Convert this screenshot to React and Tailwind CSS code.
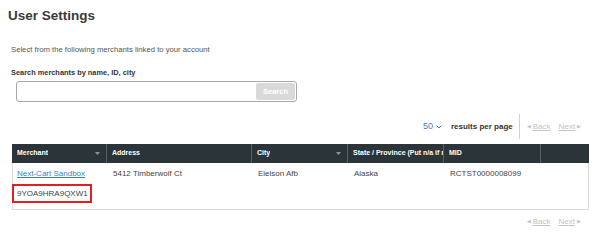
import React from "react";

const font = { fontFamily: '"Liberation Sans", Arial, sans-serif' };

function Caret({ className = "" }) {
  return (
    <svg width="5" height="3" viewBox="0 0 5 3" className={className}>
      <path d="M0 0 L5 0 L2.5 3 Z" fill="currentColor" />
    </svg>
  );
}

function Chevron() {
  return (
    <svg width="6" height="4" viewBox="0 0 6 4" className="inline-block ml-[3px]">
      <path d="M0.6 0.6 L3 3 L5.4 0.6" fill="none" stroke="#3b7fc4" strokeWidth="1" />
    </svg>
  );
}

function Pager() {
  return (
    <div className="flex items-center gap-[8px] text-[8px] text-[#c3c3c3]">
      <span className="flex items-center gap-[2px]">
        <span className="text-[5px]">◀</span>
        <span className="underline">Back</span>
      </span>
      <span className="flex items-center gap-[2px]">
        <span className="underline">Next</span>
        <span className="text-[5px]">▶</span>
      </span>
    </div>
  );
}

const cols = [
  { label: "Merchant", w: "w-[95px]", caret: true },
  { label: "Address", w: "w-[145px]" },
  { label: "City", w: "w-[96px]", caret: true },
  { label: "State / Province (Put n/a if not applicable)", w: "w-[96px]", clip: true },
  { label: "MID", w: "w-[97px]" },
  { label: "", w: "w-[48px]", last: true },
];

export default function App() {
  return (
    <div className="w-[600px] h-[233px] bg-white overflow-hidden text-[#333]" style={font}>
      <div className="pl-[8px] pt-[8px]">
        <div className="text-[13.5px] leading-[16px] font-semibold text-[#3a3a3a]">User Settings</div>
      </div>
      <div className="pl-[11px] mt-[21px] text-[7.7px] leading-[10px] text-[#555]">
        Select from the following merchants linked to your account
      </div>
      <div className="pl-[11px] mt-[13px] text-[7.4px] leading-[9px] font-bold text-[#333]">
        Search merchants by name, ID, city
      </div>
      <div className="ml-[16px] mt-[4px] w-[281px] h-[21px] border border-[#a9a9a9] rounded-[3px] flex items-center justify-end pr-[1px]">
        <div className="w-[39px] h-[17px] bg-[#d9d9d9] rounded-[2px] flex items-center justify-center text-white text-[7.5px] font-bold">
          Search
        </div>
      </div>
      <div className="flex items-center justify-end mt-[12px] pr-[19px] h-[25px]">
        <span className="text-[9px] text-[#3b7fc4] flex items-center">
          50
          <Chevron />
        </span>
        <span className="ml-[9px] text-[8px] font-bold text-[#333]">results per page</span>
        <div className="ml-[6px] w-px h-[25px] bg-[#cfcfcf]" />
        <div className="ml-[7px]">
          <Pager />
        </div>
      </div>
      <div className="ml-[12px] mt-[5px] w-[577px]">
        <div className="flex h-[19px] bg-[#2b3539]">
          {cols.map((c, i) => (
            <div
              key={i}
              className={`${c.w} shrink-0 h-full flex items-center justify-between pl-[5px] ${c.clip ? "pr-0" : "pr-[6px]"} text-white text-[7px] font-bold whitespace-nowrap overflow-hidden ${c.last ? "" : "border-r border-[#55606a]"}`}
            >
              <span className="overflow-hidden">{c.label}</span>
              {c.caret && <Caret className="text-[#8d9599] shrink-0" />}
            </div>
          ))}
        </div>
        <div className="h-[47px] border-l border-r border-b border-[#dcdcdc] flex text-[8px] text-[#444]">
          <div className="w-[95px] shrink-0 flex flex-col">
            <div className="pl-[4px] pt-[6px] leading-[10px] text-[#3b7fc4] underline">Next-Cart Sandbox</div>
            <div className="mt-[5px] ml-[-1px] w-[80px] h-[19px] border-2 border-solid border-[#e02020] flex items-center pl-[3px] text-[#444]">
              9YOA9HRA9QXW1
            </div>
          </div>
          <div className="w-[145px] shrink-0 pl-[5px] pt-[6px] leading-[10px]">5412 Timberwolf Ct</div>
          <div className="w-[96px] shrink-0 pl-[5px] pt-[6px] leading-[10px]">Eielson Afb</div>
          <div className="w-[96px] shrink-0 pl-[5px] pt-[6px] leading-[10px]">Alaska</div>
          <div className="w-[97px] shrink-0 pl-[5px] pt-[6px] leading-[10px]">RCTST0000008099</div>
        </div>
      </div>
      <div className="flex justify-end pr-[19px] mt-[6px]">
        <Pager />
      </div>
    </div>
  );
}
